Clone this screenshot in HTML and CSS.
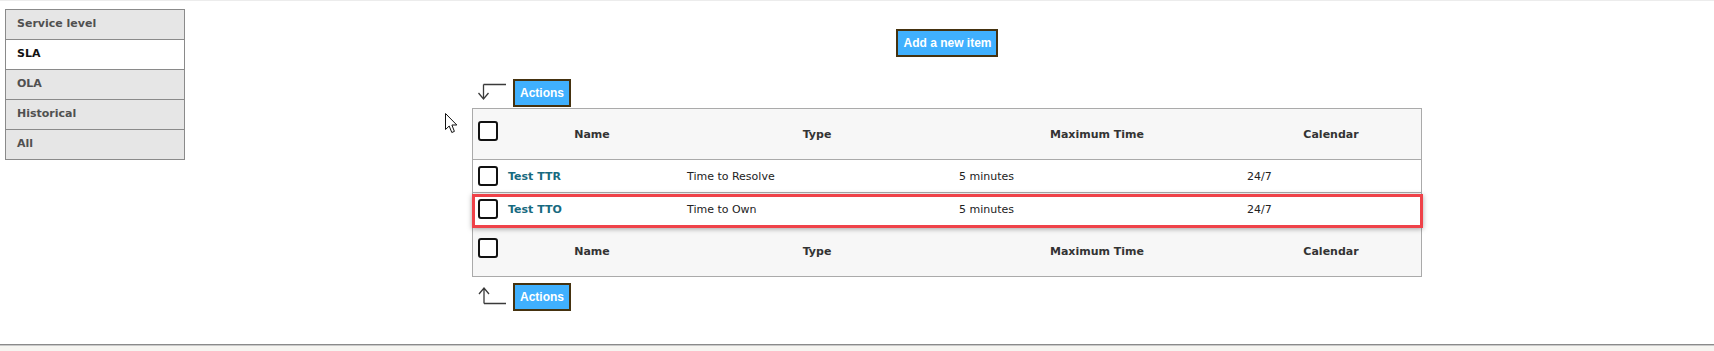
FILE: index.html
```html
<!DOCTYPE html>
<html lang="en">
<head>
	<meta charset="UTF-8">
	<title>Service levels</title>
	<link rel="stylesheet" href="styles.css">
</head>
<body>

<div class="page">
	<nav class="side">
		<a class="side-item">Service level</a>
		<a class="side-item active">SLA</a>
		<a class="side-item">OLA</a>
		<a class="side-item">Historical</a>
		<a class="side-item">All</a>
	</nav>

	<main class="main">
		<button class="btn">Add a new item</button>

		<div class="list">
			<div class="actions">
				<svg class="arrow" width="30" height="28" viewBox="0 0 30 28">
					<path d="M6.5 5.5 H29 M6.5 5.5 V20 M1.5 14 L6.5 20 L11.5 14" />
				</svg>
				<button class="btn">Actions</button>
			</div>

			<div class="grid">
				<div class="row head">
					<div class="cell"><span class="check"></span></div>
					<div class="cell">Name</div>
					<div class="cell">Type</div>
					<div class="cell">Maximum Time</div>
					<div class="cell">Calendar</div>
				</div>
				<div class="row item">
					<div class="cell"><span class="check"></span></div>
					<div class="cell"><a class="name">Test TTR</a></div>
					<div class="cell">Time to Resolve</div>
					<div class="cell">5 minutes</div>
					<div class="cell">24/7</div>
				</div>
				<div class="row item marked">
					<div class="cell"><span class="check"></span></div>
					<div class="cell"><a class="name">Test TTO</a></div>
					<div class="cell">Time to Own</div>
					<div class="cell">5 minutes</div>
					<div class="cell">24/7</div>
				</div>
				<div class="row head">
					<div class="cell"><span class="check"></span></div>
					<div class="cell">Name</div>
					<div class="cell">Type</div>
					<div class="cell">Maximum Time</div>
					<div class="cell">Calendar</div>
				</div>
			</div>

			<div class="actions bottom">
				<svg class="arrow" width="30" height="28" viewBox="0 0 30 28">
					<path d="M7 20.5 H29 M7 20.5 V5 M2 11 L7 5 L12 11" />
				</svg>
				<button class="btn">Actions</button>
			</div>
		</div>
	</main>
</div>

<div class="foot"></div>

<!-- mouse pointer caught in the screenshot -->
<svg class="cursor" width="13" height="21" viewBox="0 0 13 21">
	<path d="M0.5 0.5 V16.5 L4.2 13 L6.8 19.5 L9.4 18.4 L6.9 12 H11.8 Z" />
</svg>

</body>
</html>
```

FILE: styles.css
```css
html, body {
	height: 100%;
}

body {
	margin: 0;
	border-top: 1px solid #ececec;
	box-sizing: border-box;
	display: flex;
	flex-direction: column;
	font-family: 'DejaVu Sans', Verdana, sans-serif;
	font-size: 11px;
	color: #222;
	background: white;
}

.page {
	flex: 1;
	display: flex;
	align-items: flex-start;
}

/* left menu */

.side {
	width: 180px;
	box-sizing: border-box;
	margin: 8px 0 0 5px;
	border: 1px solid #8a8a8a;
	background: #e6e6e6;
	display: flex;
	flex-direction: column;
}

.side-item {
	height: 29px;
	line-height: 27px;
	padding-left: 11px;
	border-top: 1px solid #8a8a8a;
	font-weight: bold;
	color: #505050;
}
.side-item:first-child {
	border-top: none;
}
.side-item.active {
	background: white;
	color: #111;
}

/* main column */

.main {
	flex: 1;
	display: flex;
	flex-direction: column;
	align-items: center;
	padding-right: 5px;
}

.btn {
	font-family: 'Liberation Sans', Arial, sans-serif;
	font-size: 12px;
	font-weight: bold;
	color: white;
	background: #40b0fe;
	border: 2px solid #45320f;
	height: 28px;
	padding: 0 5px;
	margin: 0;
}

.main > .btn {
	margin-top: 28px;
	padding: 0 4px 0 5px;
}

.list {
	width: 950px;
	margin-top: 22px;
}

.actions {
	display: flex;
	align-items: center;
	gap: 6px;
	padding-left: 5px;
	margin-bottom: 1px;
}
.actions.bottom {
	margin: 6px 0 0;
}

.arrow path {
	fill: none;
	stroke: #3a3a3a;
	stroke-width: 1.3;
}

/* table */

.grid {
	border: 1px solid #aaa;
	background: white;
}

.row {
	display: grid;
	grid-template-columns: 30px 178px 272px 288px 180px;
	align-items: center;
	border-bottom: 1px solid #aaa;
}
.row:last-child {
	border-bottom: none;
}

.head {
	height: 50px;
	background: #f7f7f7;
	font-weight: bold;
	color: #333;
}
.head .cell {
	text-align: center;
	padding-top: 1px;
}
.head .cell:first-child {
	padding-top: 0;
	margin-bottom: 6px;
}

.item {
	height: 32px;
}
.item .cell {
	padding-left: 6px;
}

.row .cell:first-child {
	padding-left: 5px;
	text-align: left;
	line-height: 0;
}
.item .cell:nth-child(2) {
	padding-left: 5px;
}

.check {
	display: inline-block;
	width: 20px;
	height: 20px;
	box-sizing: border-box;
	border: 2px solid #111;
	border-radius: 3px;
	background: white;
}

.name {
	font-weight: bold;
	color: #176a80;
}

.marked {
	position: relative;
}
.marked::after {
	content: '';
	position: absolute;
	top: 1px;
	bottom: -3px;
	left: -1px;
	right: -2px;
	border: 3px solid #ef4249;
	box-shadow: 0 1px 5px rgba(0, 0, 0, 0.35);
	pointer-events: none;
}

/* bottom strip */

.foot {
	height: 6px;
	border-top: 1px solid #8a8a8a;
	box-shadow: inset 0 1px 0 #c9c9c9;
	background: #f6f5f1;
}

.cursor {
	position: absolute;
	left: 445px;
	top: 113px;
}
.cursor path {
	fill: white;
	stroke: #111;
	stroke-width: 1;
	stroke-linejoin: round;
}
```
